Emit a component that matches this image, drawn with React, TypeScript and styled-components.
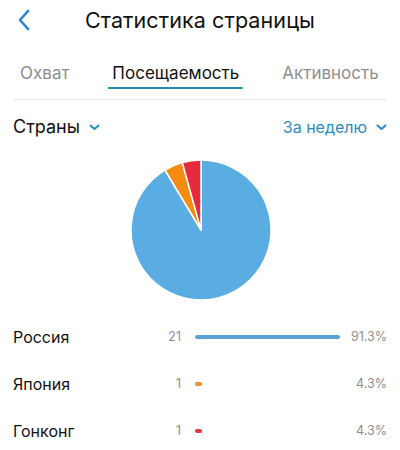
import React from "react";
import styled, { createGlobalStyle } from "styled-components";

interface ICountry {
  name: string;
  count: number;
  share: number;
  color: string;
  barColor: string;
}

const GlobalStyle = createGlobalStyle`
  body {
    margin: 0;
    background: #ffffff;
    font-family: Inter, "Noto Sans", sans-serif;
    -webkit-font-smoothing: antialiased;
  }
`;

const Page = styled.div`
  width: 400px;
  height: 450px;
  overflow: hidden;
  display: flex;
  flex-direction: column;

  & > * {
    flex-shrink: 0;
  }
`;

const Header = styled.header`
  position: relative;
  height: 40px;
  display: flex;
  align-items: center;
  justify-content: center;
`;

const BackButton = styled.button`
  position: absolute;
  left: 12px;
  top: 7px;
  width: 24px;
  height: 26px;
  padding: 0;
  border: none;
  background: none;
  display: flex;
  align-items: center;
  justify-content: center;
`;

const Title = styled.h1`
  margin: 0;
  font-size: 21.5px;
  font-weight: 400;
  color: #111;
  letter-spacing: 0.1px;
`;

const Tabs = styled.nav`
  margin-top: 18px;
  height: 31px;
  display: flex;
  gap: 35px;
  padding-left: 16px;
`;

const Tab = styled.div<{ $active?: boolean }>`
  position: relative;
  padding: 0 4px;
  font-size: 17px;
  line-height: 30px;
  color: ${(p) => (p.$active ? "#111" : "#8e8e8e")};

  &::after {
    content: "";
    display: ${(p) => (p.$active ? "block" : "none")};
    position: absolute;
    left: 0;
    right: 0;
    bottom: 0;
    height: 2.5px;
    border-radius: 2px;
    background: #1c8cb0;
  }
`;

const Divider = styled.hr`
  margin: 10px 13px 0;
  border: none;
  height: 1px;
  background: #e6e6e6;
`;

const Filters = styled.div`
  margin-top: 16px;
  padding: 0 13px;
  display: flex;
  justify-content: space-between;
  align-items: center;
`;

const Filter = styled.div<{ $accent?: boolean }>`
  display: flex;
  align-items: center;
  gap: 9px;
  font-size: ${(p) => (p.$accent ? "16px" : "18px")};
  line-height: 22px;
  color: ${(p) => (p.$accent ? "#2a8cc4" : "#111")};
`;

const ChartBox = styled.div`
  margin-top: 21px;
  display: flex;
  justify-content: center;
  padding-left: 2px;
`;

const List = styled.div`
  margin-top: 12px;
  padding: 0 13px;
  display: grid;
  grid-template-columns: 1fr 30px 159px 47px;
  grid-auto-rows: 47px;
  align-items: center;
`;

const Name = styled.div`
  font-size: 16px;
  color: #111;
`;

const Count = styled.div`
  font-size: 12.5px;
  color: #8e8e8e;
  text-align: right;
`;

const BarCell = styled.div`
  padding-left: 14px;
  display: flex;
`;

const Bar = styled.div<{ $color: string }>`
  height: 4px;
  border-radius: 2px;
  background: ${(p) => p.$color};
`;

const Share = styled.div`
  font-size: 12.5px;
  color: #8e8e8e;
  text-align: right;
`;

const countries: ICountry[] = [
  { name: "Россия", count: 21, share: 91.3, color: "#59ade3", barColor: "#5aa2d4" },
  { name: "Япония", count: 1, share: 4.3, color: "#f68b12", barColor: "#ef9129" },
  { name: "Гонконг", count: 1, share: 4.3, color: "#e8283c", barColor: "#e23838" },
];

const Chevron = ({ color }: { color: string }) => (
  <svg width="11" height="7" viewBox="0 0 11 7">
    <path d="M1.5 1.5 L5.5 5 L9.5 1.5" fill="none" stroke={color} strokeWidth="2" strokeLinecap="round" strokeLinejoin="round" />
  </svg>
);

function PieChart({ data, r }: { data: ICountry[]; r: number }) {
  const total = data.reduce((s, d) => s + d.share, 0);
  let angle = 0;
  const point = (a: number) => {
    const rad = ((a - 90) * Math.PI) / 180;
    return [r + 1 + r * Math.cos(rad), r + 1 + r * Math.sin(rad)];
  };
  return (
    <svg width={r * 2 + 2} height={r * 2 + 2}>
      {data.map((d) => {
        const start = angle;
        const end = angle + (d.share / total) * 360;
        angle = end;
        const [x1, y1] = point(start);
        const [x2, y2] = point(end);
        const large = end - start > 180 ? 1 : 0;
        return (
          <path
            key={d.name}
            d={`M${r + 1} ${r + 1} L${x1} ${y1} A${r} ${r} 0 ${large} 1 ${x2} ${y2} Z`}
            fill={d.color}
            stroke="#fff"
            strokeWidth="1.5"
            strokeLinejoin="round"
          />
        );
      })}
    </svg>
  );
}

export default function App() {
  const max = Math.max(...countries.map((c) => c.share));
  return (
    <Page>
      <GlobalStyle />
      <Header>
        <BackButton>
          <svg width="14" height="22" viewBox="0 0 14 22">
            <path d="M11 2 L3 11 L11 20" fill="none" stroke="#2a86d1" strokeWidth="2.6" strokeLinecap="round" strokeLinejoin="round" />
          </svg>
        </BackButton>
        <Title>Статистика страницы</Title>
      </Header>
      <Tabs>
        <Tab>Охват</Tab>
        <Tab $active>Посещаемость</Tab>
        <Tab>Активность</Tab>
      </Tabs>
      <Divider />
      <Filters>
        <Filter>
          Страны <Chevron color="#2a8cc4" />
        </Filter>
        <Filter $accent>
          За неделю <Chevron color="#2a8cc4" />
        </Filter>
      </Filters>
      <ChartBox>
        <PieChart data={countries} r={70} />
      </ChartBox>
      <List>
        {countries.map((c) => (
          <React.Fragment key={c.name}>
            <Name>{c.name}</Name>
            <Count>{c.count}</Count>
            <BarCell>
              <Bar $color={c.barColor} style={{ width: `${Math.max((c.share / max) * 145, 7)}px` }} />
            </BarCell>
            <Share>{c.share}%</Share>
          </React.Fragment>
        ))}
      </List>
    </Page>
  );
}
